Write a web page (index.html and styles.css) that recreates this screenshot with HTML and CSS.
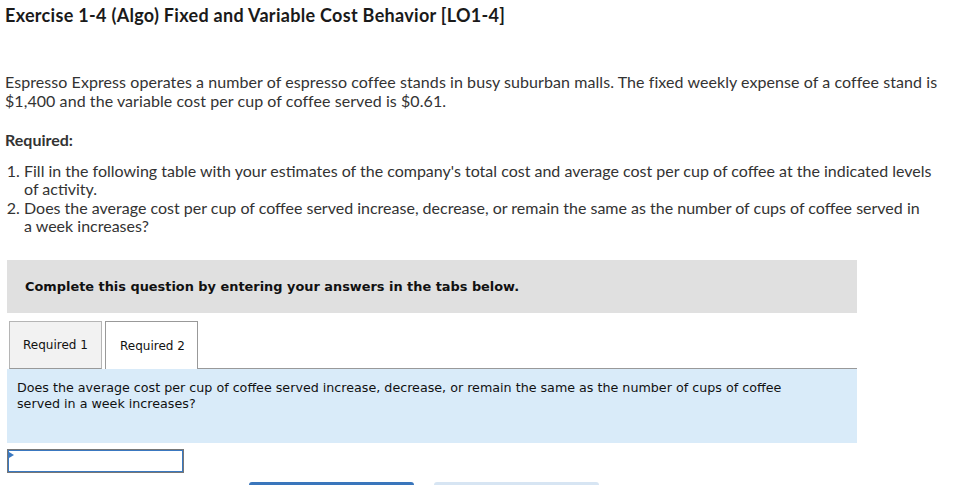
FILE: index.html
```html
<!DOCTYPE html>
<html>
<head>
<meta charset="utf-8">
<link rel="stylesheet" href="styles.css">
</head>
<body>
<div class="page">
  <h1 class="title">Exercise 1-4 (Algo) Fixed and Variable Cost Behavior [LO1-4]</h1>
  <p class="intro">Espresso Express operates a number of espresso coffee stands in busy suburban malls. The fixed weekly expense of a coffee stand is $1,400 and the variable cost per cup of coffee served is $0.61.</p>
  <p class="req">Required:</p>
  <ol class="reqlist">
    <li>Fill in the following table with your estimates of the company's total cost and average cost per cup of coffee at the indicated levels of activity.</li>
    <li>Does the average cost per cup of coffee served increase, decrease, or remain the same as the number of cups of coffee served in a&nbsp;week increases?</li>
  </ol>
  <div class="qbox">
    <div class="banner">Complete this question by entering your answers in the tabs below.</div>
    <div class="tabs">
      <div class="tab">Required 1</div>
      <div class="tab active">Required 2</div>
      <div class="tabrest"></div>
    </div>
    <div class="panel">Does the average cost per cup of coffee served increase, decrease, or remain the same as the number of cups of coffee served in a week increases?</div>
    <div class="answer"><div class="select"><span class="tri"></span></div></div>
    <div class="buttons">
      <div class="btn prev"></div>
      <div class="btn next"></div>
    </div>
  </div>
</div>
</body>
</html>
```
FILE: styles.css
```css
html, body { margin: 0; padding: 0; background: #fff; }
body { color: #222; overflow: hidden; height: 487px; }
.page { padding: 0 5px; font-family: Lato, "Liberation Sans", sans-serif; }
.title {
  margin: 0;
  padding-top: 4px;
  font-size: 18px;
  letter-spacing: 0.3px;
  font-weight: 700;
  line-height: 22px;
  color: #1a1a1a;
}
.intro {
  margin: 46px 0 0 0;
  font-size: 16px;
  letter-spacing: 0.07px;
  line-height: 19px;
  color: #333;
}
.req {
  margin: 20px 0 0 0;
  font-size: 16px;
  font-weight: 700;
  line-height: 19px;
  color: #333;
}
.reqlist {
  margin: 13px 0 0 0;
  padding: 0 12px 0 19px;
  font-size: 16px;
  letter-spacing: 0;
  line-height: 18px;
  color: #333;
}
.reqlist li { margin-bottom: 1px; padding-left: 0; }
.qbox { margin: 25px 0 0 2px; width: 850px; font-family: "DejaVu Sans", Verdana, sans-serif; }
.banner {
  background: #e0e0e0;
  height: 53px;
  display: flex;
  align-items: center;
  padding-left: 18px;
  font-size: 12.9px;
  font-weight: 700;
  color: #111;
}
.tabs { display: flex; margin-top: 8px; height: 48px; }
.tab {
  box-sizing: border-box;
  width: 93px;
  height: 48px;
  margin-left: 2px;
  border: 1px solid #b5b5b5;
  background: #f2f2f2;
  font-size: 12px;
  color: #111;
  display: flex;
  align-items: center;
  padding-left: 13px;
}
.tab.active {
  margin-left: 3px;
  padding-left: 14px;
  background: #fff;
  border-color: #999;
  border-bottom: none;
}
.tab:first-child { border-bottom-color: #999; }
.tabrest { flex: 1; border-bottom: 1px solid #999; }
.panel {
  background: #d9ebf9;
  height: 74px;
  box-sizing: border-box;
  padding: 11px 66px 0 10px;
  font-size: 12.7px;
  line-height: 16px;
  color: #111;
}
.answer { margin-top: 6px; }
.select {
  box-sizing: border-box;
  width: 177px;
  height: 24px;
  border: 1px solid #777;
  box-shadow: inset 0 0 0 1px #3a78c0;
  background: #fff;
  position: relative;
}
.tri {
  position: absolute;
  left: 1px;
  top: 2px;
  width: 0;
  height: 0;
  border-top: 3px solid transparent;
  border-bottom: 3px solid transparent;
  border-left: 5px solid #3a78c0;
}
.buttons { display: flex; gap: 20px; margin-top: 9px; margin-left: 242px; }
.btn { width: 165px; height: 3px; border-radius: 3px 3px 0 0; }
.prev { background: #3a76bc; }
.next { background: #d7e5f3; }
```
